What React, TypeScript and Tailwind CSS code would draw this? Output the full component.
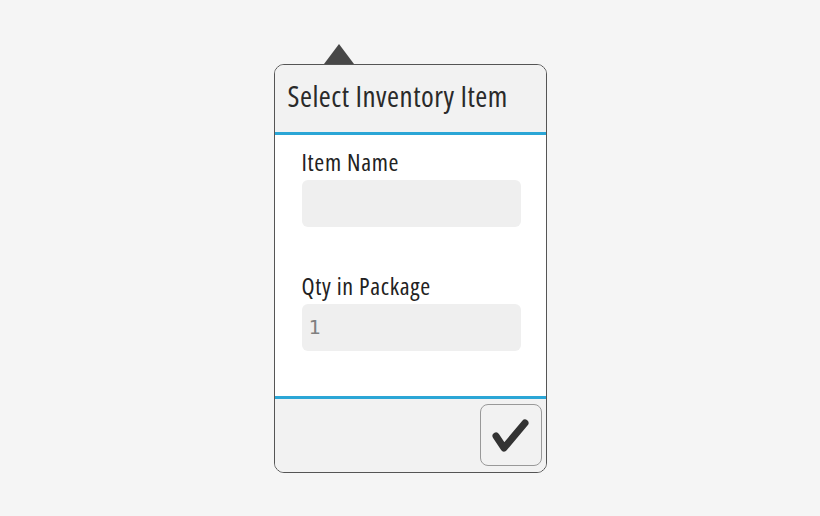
export default function App() {
  const font = { fontFamily: '"Open Sans", "Noto Sans", sans-serif', fontStretch: '75%' };
  return (
    <div className="h-screen w-full bg-[#f5f5f5] flex flex-col items-center justify-center" style={font}>
      <div className="w-[273px] flex flex-col">
        {/* pointer */}
        <div className="ml-[50px] w-0 h-0 border-l-[15px] border-r-[15px] border-b-[20px] border-l-transparent border-r-transparent border-b-[#474747]" />

        <div className="border border-[#555] rounded-[10px] overflow-hidden bg-white">
          {/* header */}
          <div className="h-[70px] bg-[#f2f2f2] border-b-[3px] border-[#2ba6d6] flex items-center pl-[13px] pb-[4px]">
            <span className="whitespace-nowrap text-[29px] tracking-[0.5px] text-[#2a2a2a]">Select Inventory Item</span>
          </div>

          {/* body */}
          <div className="h-[261px] pl-[27px] pr-[25px] pt-[12px] flex flex-col">
            <label className="whitespace-nowrap text-[24px] leading-[30px] tracking-[0.7px] text-[#222]">Item Name</label>
            <div className="mt-[3px] h-[47px] rounded-[6px] bg-[#efefef]" />
            <label className="mt-[44px] whitespace-nowrap text-[24px] leading-[30px] tracking-[0.7px] text-[#222]">Qty in Package</label>
            <div className="mt-[3px] h-[47px] rounded-[6px] bg-[#efefef] flex items-center pl-[7px]">
              <span className="text-[20px] text-[#808080]" style={{ fontFamily: '"DejaVu Sans Mono", monospace', fontStretch: 'normal' }}>1</span>
            </div>
          </div>

          {/* footer */}
          <div className="h-[76px] bg-[#f2f2f2] border-t-[3px] border-[#2ba6d6] flex justify-end items-start pt-[5px] pr-[4px]">
            <button className="w-[62px] h-[62px] rounded-[8px] border border-[#999] bg-[#f2f2f2] flex items-center justify-center">
              <svg width="44" height="40" viewBox="0 0 44 40">
                <path d="M7 21 L15 33 L36 8" fill="none" stroke="#333" strokeWidth="7" strokeLinecap="round" strokeLinejoin="round" />
              </svg>
            </button>
          </div>
        </div>
      </div>
    </div>
  );
}
